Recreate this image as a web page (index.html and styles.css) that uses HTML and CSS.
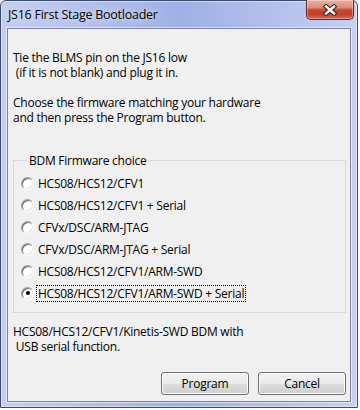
FILE: index.html
```
<!DOCTYPE html>
<html>
<head>
<meta charset="utf-8">
<link rel="stylesheet" href="styles.css">
</head>
<body>
<div class="window">
  <div class="titlebar">
    <span class="title">JS16 First Stage Bootloader</span>
    <div class="close">
      <svg width="16" height="12" viewBox="0 0 16 12">
        <path d="M4 2.5 L12 9.5 M12 2.5 L4 9.5" stroke="#3b2420" stroke-width="4.6" stroke-linecap="square" fill="none"/>
        <path d="M4 2.5 L12 9.5 M12 2.5 L4 9.5" stroke="#ffffff" stroke-width="2.4" stroke-linecap="square" fill="none"/>
      </svg>
    </div>
  </div>
  <div class="client">
    <p class="intro">Tie the BLMS pin on the JS16 low
 (if it is not blank) and plug it in.

Choose the firmware matching your hardware
and then press the Program button.</p>
    <fieldset class="group">
      <legend class="group-title">BDM Firmware choice</legend>
      <div class="opt"><span class="radio"></span><span class="lbl">HCS08/HCS12/CFV1</span></div>
      <div class="opt"><span class="radio"></span><span class="lbl">HCS08/HCS12/CFV1 + Serial</span></div>
      <div class="opt"><span class="radio"></span><span class="lbl">CFVx/DSC/ARM-JTAG</span></div>
      <div class="opt"><span class="radio"></span><span class="lbl">CFVx/DSC/ARM-JTAG + Serial</span></div>
      <div class="opt"><span class="radio"></span><span class="lbl">HCS08/HCS12/CFV1/ARM-SWD</span></div>
      <div class="opt"><span class="radio checked"></span><span class="lbl focus">HCS08/HCS12/CFV1/ARM-SWD + Serial</span></div>
    </fieldset>
    <p class="desc">HCS08/HCS12/CFV1/Kinetis-SWD BDM with
 USB serial function.</p>
    <div class="buttons">
      <button class="btn">Program</button>
      <button class="btn">Cancel</button>
    </div>
  </div>
</div>
</body>
</html>
```
FILE: styles.css
```
* { box-sizing: border-box; }
html, body {
  margin: 0;
  padding: 0;
  background: #ffffff;
}
body {
  font-family: "Open Sans", "Noto Sans", sans-serif;
  font-size: 12px;
  letter-spacing: -0.25px;
  color: #000;
}
.window {
  width: 358px;
  height: 408px;
  border: 1px solid #3c4a6e;
  border-radius: 6px 6px 0 0;
  background: linear-gradient(90deg, #c4cef0 0%, #b3c0ec 25%, #9eb0e4 50%, #b2bfeb 75%, #c6d0f0 100%);
  box-shadow: inset 0 0 0 1px rgba(255,255,255,0.45);
  padding: 0 6px 5px 6px;
  display: flex;
  flex-direction: column;
}
.titlebar {
  height: 27px;
  display: flex;
  align-items: flex-start;
  flex: none;
}
.title {
  padding-top: 6px;
  padding-left: 1px;
  line-height: 15px;
  font-size: 12.5px;
  text-shadow: 0 0 6px rgba(255,255,255,0.9);
}
.close {
  margin-left: auto;
  margin-top: -1px;
  margin-right: -3px;
  width: 48px;
  height: 20px;
  border: 1px solid #5b2b26;
  border-top: none;
  border-radius: 0 0 5px 5px;
  background: linear-gradient(#eab0a2 0%, #dc8c78 40%, #c8472f 52%, #c23f29 75%, #d46c55 100%);
  box-shadow: inset 0 0 0 1px rgba(255,255,255,0.35);
  display: flex;
  align-items: center;
  justify-content: center;
}
.client {
  flex: 1;
  background: #f0f0f0;
  border: 1px solid #7b849c;
  box-shadow: 0 0 0 1px rgba(255,255,255,0.55);
  padding: 21px 4px 0 5px;
  display: flex;
  flex-direction: column;
}
.intro, .desc {
  margin: 0;
  line-height: 15px;
  white-space: pre;
}
.group {
  margin: 28px 0 0 0;
  padding: 4px 0 8px 7px;
  border: 1px solid #d5d9dd;
  min-width: 0;
}
.group-title {
  margin-left: 6px;
  padding: 0 2px;
  line-height: 15px;
}
.opt {
  height: 22px;
  display: flex;
  align-items: center;
}
.radio {
  width: 13px;
  height: 13px;
  border-radius: 50%;
  border: 1px solid;
  border-color: #a0a0a0 #ffffff #ffffff #a0a0a0;
  box-shadow: inset 1px 1px 0 #6a6a6a, inset -1px -1px 0 #e3e3e3;
  background: #ffffff;
  flex: none;
  display: flex;
  align-items: center;
  justify-content: center;
}
.radio.checked::after {
  content: "";
  width: 4px;
  height: 4px;
  border-radius: 50%;
  background: #000;
}
.lbl {
  margin-left: 2px;
  padding: 0 1px;
  border: 1px dotted transparent;
  line-height: 15px;
}
.lbl.focus {
  border-color: #000;
}
.desc {
  margin-top: 11px;
}
.buttons {
  margin-top: 18px;
  display: flex;
  justify-content: flex-end;
  gap: 9px;
}
.btn {
  width: 88px;
  height: 23px;
  font: inherit;
  letter-spacing: inherit;
  color: #000;
  border: 1px solid #707070;
  border-radius: 3px;
  background: linear-gradient(#f2f2f2 0%, #ebebeb 50%, #dddddd 51%, #cfcfcf 100%);
  box-shadow: inset 0 0 0 1px #fbfbfb;
  padding: 0;
}
```
